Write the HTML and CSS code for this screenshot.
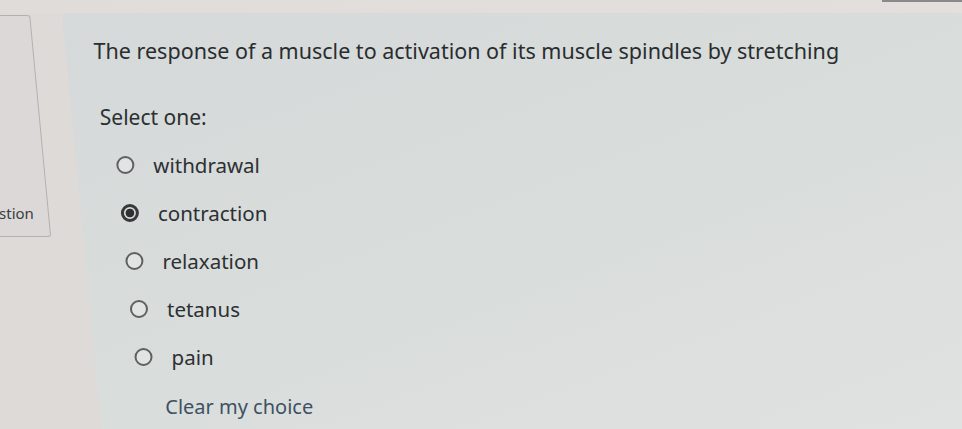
FILE: index.html
```html
<!DOCTYPE html>
<html lang="en">
<head>
<meta charset="utf-8">
<title>Question</title>
<link rel="stylesheet" href="styles.css">
</head>
<body>
<div class="screen">
  <div class="topbar"><span class="topbar-edge"></span></div>
  <div class="layout">
    <aside class="nav-card">
      <span class="nav-label upright">Flag question</span>
    </aside>
    <main class="question-card">
      <h1 class="qtext upright">The response of a muscle to activation of its muscle spindles by stretching</h1>
      <p class="prompt upright">Select one:</p>
      <div class="answers">
        <label class="answer"><span class="radio upright"></span><span class="answer-text upright">withdrawal</span></label>
        <label class="answer"><span class="radio radio-checked upright"></span><span class="answer-text upright">contraction</span></label>
        <label class="answer"><span class="radio upright"></span><span class="answer-text upright">relaxation</span></label>
        <label class="answer"><span class="radio upright"></span><span class="answer-text upright">tetanus</span></label>
        <label class="answer"><span class="radio upright"></span><span class="answer-text upright">pain</span></label>
      </div>
      <a class="clear-choice upright">Clear my choice</a>
    </main>
  </div>
</div>
</body>
</html>
```

FILE: styles.css
```css
html, body {
  margin: 0;
  padding: 0;
}

body {
  width: 962px;
  height: 429px;
  overflow: hidden;
  background: #dedad8;
  font-family: "Noto Sans", "Open Sans", sans-serif;
  color: #2b2f31;
}

.screen {
  height: 429px;
  display: flex;
  flex-direction: column;
}

.topbar {
  height: 13px;
  flex: none;
  display: flex;
  justify-content: flex-end;
  background: linear-gradient(90deg, #e0dcda, #e2dfdd);
}

.topbar-edge {
  width: 80px;
  height: 2px;
  background: #8c8a89;
}

/* the whole view leans slightly, glyphs are turned back upright */
.layout {
  flex: 1;
  display: flex;
  align-items: flex-start;
  transform: skewX(5.4deg);
  transform-origin: 0 0;
}

.upright {
  display: inline-block;
  transform: skewX(-5.4deg);
}

.nav-card {
  width: 70px;
  height: 222px;
  margin-top: 2px;
  margin-left: -40px;
  box-sizing: border-box;
  border: 1px solid #b3b1b0;
  border-radius: 3px;
  background: #dcd8d7;
  display: flex;
  align-items: flex-end;
  justify-content: flex-end;
  overflow: hidden;
}

.nav-label {
  flex: none;
  font-size: 15px;
  line-height: 20px;
  color: #3a3d3f;
  white-space: nowrap;
  margin-right: 14px;
  margin-bottom: 13px;
}

.question-card {
  flex: 1;
  align-self: stretch;
  margin-left: 32px;
  padding: 23px 0 0 28px;
  border-radius: 4px 0 0 0;
  background: linear-gradient(160deg, #d5d9d9 0%, #d8dcdb 45%, #dfe2e1 100%);
  display: flex;
  flex-direction: column;
  align-items: flex-start;
}

.qtext {
  margin: 0;
  font-size: 21.5px;
  font-weight: 400;
  line-height: 30px;
  white-space: nowrap;
  color: #292d2f;
}

.prompt {
  margin: 36px 0 0 0;
  font-size: 21px;
  line-height: 30px;
  color: #2c3032;
}

.answers {
  margin-top: 9px;
  margin-left: 12px;
  display: flex;
  flex-direction: column;
}

.answer {
  height: 48px;
  display: flex;
  align-items: center;
  gap: 19px;
}

.radio {
  width: 18px;
  height: 18px;
  box-sizing: border-box;
  border: 2px solid #5e6061;
  border-radius: 50%;
  background: #e2e4e3;
  flex: none;
}

.radio-checked {
  border: 3px solid #37393a;
  background: radial-gradient(circle, #2e3031 0 4px, #d9dbdb 4.7px);
}

.answer-text {
  font-size: 20.5px;
  line-height: 30px;
  color: #2c3032;
}

.clear-choice {
  margin: 11px 0 0 38px;
  font-size: 20px;
  line-height: 30px;
  color: #3d5163;
  text-decoration: none;
}
```
